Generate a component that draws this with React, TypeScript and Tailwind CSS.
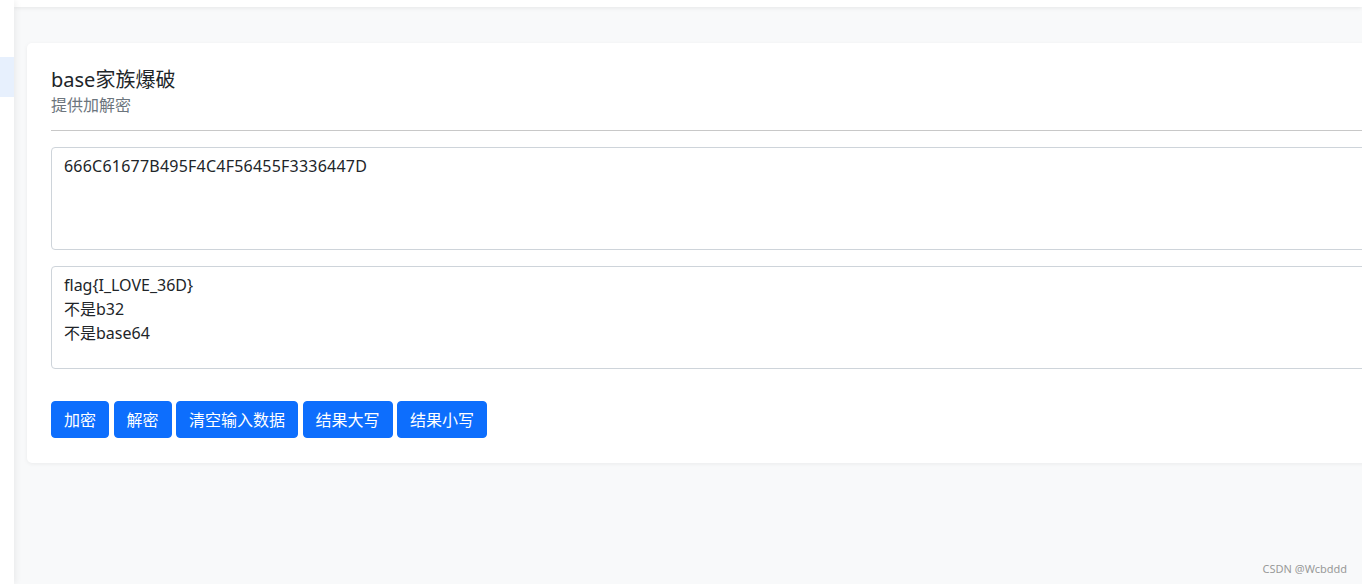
import React from "react";

export default function App() {
  const font = { fontFamily: '"Segoe UI", "Noto Sans", "Noto Sans CJK SC", sans-serif' };
  return (
    <div className="relative w-[1362px] h-[584px] overflow-hidden bg-[#f8f9fa] flex" style={font}>
      <aside className="w-[14px] h-full bg-white shadow-[2px_0_6px_rgba(0,0,0,0.06)] z-10 flex flex-col shrink-0">
        <div className="h-[57px]" />
        <div className="h-[40px] bg-[#e7f0fd]" />
      </aside>
      <div className="flex-1 flex flex-col min-w-0">
        <header className="h-[7px] bg-white shadow-[0_1px_4px_rgba(0,0,0,0.08)] shrink-0" />
        <main className="pt-[36px] pl-[13px] mr-[-60px]">
          <div className="bg-white rounded-[5px] shadow-[0_1px_4px_rgba(0,0,0,0.06)] px-[24px] pt-[25px] pb-[25px]">
            <h5 className="text-[20px] leading-[24px] text-[#212529] mb-[4px]">base家族爆破</h5>
            <h6 className="text-[16px] leading-[19px] text-[#6c757d]">提供加解密</h6>
            <hr className="mt-[15px] mb-[16px] border-0 border-t border-[#c8c8c8]" />
            <textarea
              className="block w-full h-[103px] border border-[#ced4da] rounded-[4px] px-[12px] py-[6px] text-[16px] leading-[24px] tracking-[0.22px] text-[#212529] resize-none outline-none mb-[16px]"
              defaultValue="666C61677B495F4C4F56455F3336447D"
              style={font}
            />
            <textarea
              className="block w-full h-[103px] border border-[#ced4da] rounded-[4px] px-[12px] py-[6px] text-[16px] leading-[24px] text-[#212529] resize-none outline-none"
              defaultValue={"flag{I_LOVE_36D}\n不是b32\n不是base64"}
              style={font}
            />
            <div className="mt-[32px] flex gap-[4.5px]">
              {["加密", "解密", "清空输入数据", "结果大写", "结果小写"].map((t) => (
                <button
                  key={t}
                  className="h-[37px] px-[12px] bg-[#0d6efd] border border-[#0d6efd] text-white text-[16px] leading-[24px] rounded-[4px]"
                >
                  {t}
                </button>
              ))}
            </div>
          </div>
        </main>
      </div>
      <div className="absolute right-[15px] bottom-[8px] text-[11px] text-[#999] leading-[14px]">CSDN @Wcbddd</div>
    </div>
  );
}
